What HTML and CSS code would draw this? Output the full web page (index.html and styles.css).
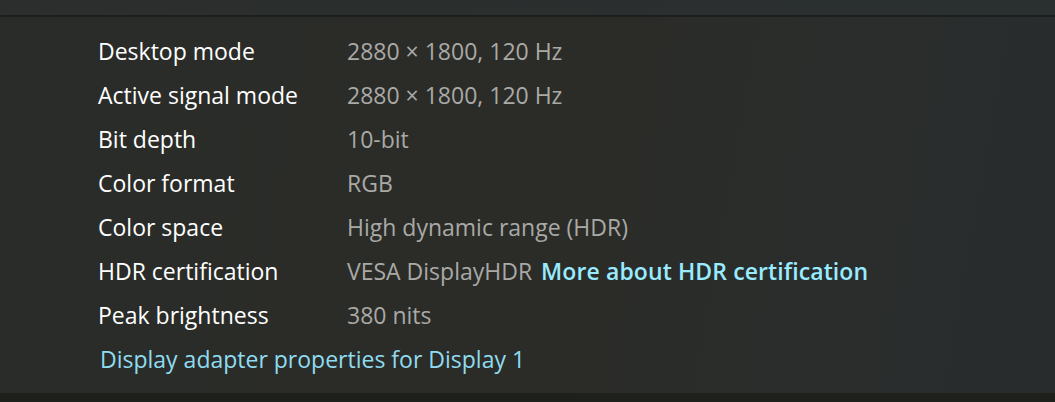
FILE: index.html
```html
<!DOCTYPE html>
<html lang="en">
<head>
  <meta charset="UTF-8" />
  <title>Advanced display</title>
  <link rel="stylesheet" href="styles.css">
</head>
<body>
  <div class="top-card"></div>
  <div class="info-card">
    <div class="info-grid">
      <div class="label">Desktop mode</div>
      <div class="value">2880 × 1800, 120 Hz</div>
      <div class="label">Active signal mode</div>
      <div class="value">2880 × 1800, 120 Hz</div>
      <div class="label">Bit depth</div>
      <div class="value">10-bit</div>
      <div class="label">Color format</div>
      <div class="value">RGB</div>
      <div class="label">Color space</div>
      <div class="value">High dynamic range (HDR)</div>
      <div class="label">HDR certification</div>
      <div class="value">VESA DisplayHDR <a href="#" class="link strong">More about HDR certification</a></div>
      <div class="label">Peak brightness</div>
      <div class="value">380 nits</div>
    </div>
    <a href="#" class="link adapter">Display adapter properties for Display 1</a>
  </div>
  <div class="bottom-strip"></div>
</body>
</html>
```

FILE: styles.css
```css
* {
  margin: 0;
  padding: 0;
  box-sizing: border-box;
}
body {
  background: #2b2c29;
  font-family: 'Open Sans', 'Noto Sans', sans-serif;
  font-size: 23px;
  height: 402px;
  overflow: hidden;
  display: flex;
  flex-direction: column;
}
.top-card {
  height: 17px;
  background: linear-gradient(90deg, #2b2e2c 0%, #2a2f30 100%);
  border-bottom: 2px solid #1c1f1e;
}
.info-card {
  height: 376px;
  padding: 12px 0 0 98px;
  background: linear-gradient(100deg, #2a2c29 0%, #2b2c28 55%, #2a2d2c 80%, #282c2d 100%);
}
.info-grid {
  display: grid;
  grid-template-columns: 249px auto;
  grid-auto-rows: 44px;
  align-items: center;
}
.label {
  color: #ffffff;
}
.value {
  color: #a9a9a6;
}
.link {
  color: #99ebff;
  text-decoration: none;
}
.link.strong {
  font-weight: 600;
  margin-left: 3px;
  letter-spacing: 0.1px;
}
.adapter {
  display: flex;
  align-items: center;
  height: 44px;
  margin-left: 2px;
  color: #8fdcf0;
}
.bottom-strip {
  flex: 1;
  background: #1e201c;
}
```
